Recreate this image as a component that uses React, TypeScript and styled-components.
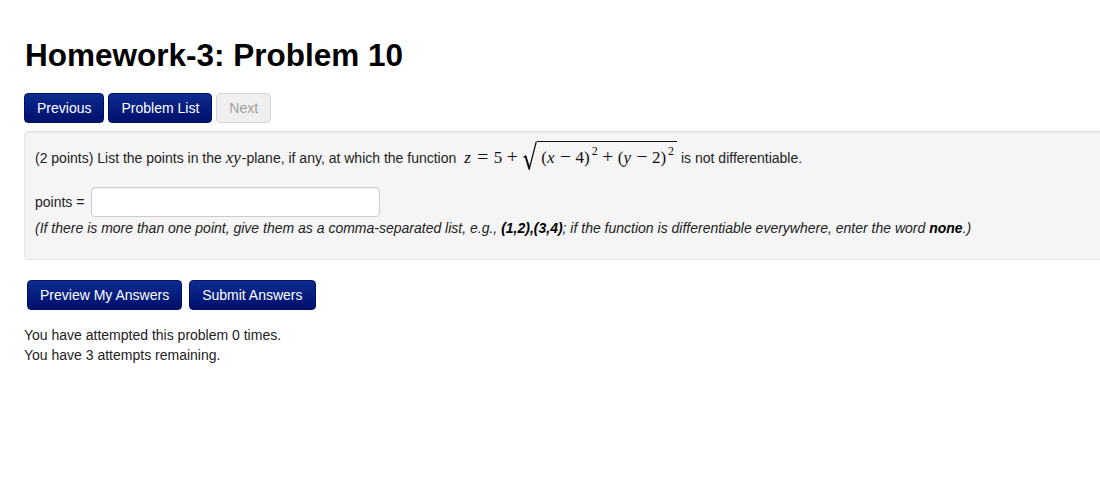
import React from 'react';
import styled, { createGlobalStyle } from 'styled-components';

const GlobalStyle = createGlobalStyle`
  html, body {
    margin: 0;
    padding: 0;
    background: #fff;
  }
  body {
    font-family: "Liberation Sans", Arial, sans-serif;
    font-size: 14px;
    line-height: 20px;
    color: #333;
  }
`;

const Page = styled.div`
  overflow: hidden;
  padding: 38px 0 0 24px;
`;

const Title = styled.h2`
  margin: 0 0 20px 1px;
  font-size: 31.5px;
  line-height: 1.1;
  font-weight: bold;
  color: #000;
`;

const NavBar = styled.div`
  display: flex;
  gap: 4px;
  margin-bottom: 8px;
`;

const Button = styled.button<{ $disabled?: boolean }>`
  font-family: "Liberation Sans", Arial, sans-serif;
  font-size: 14px;
  line-height: 20px;
  height: 30px;
  padding: 4px 12px;
  border-radius: 4px;
  border: 1px solid ${(p) => (p.$disabled ? '#d6d6d6' : '#001063')};
  background: ${(p) =>
    p.$disabled ? '#efefef' : 'linear-gradient(to bottom, #0c2c90, #000f6c)'};
  color: ${(p) => (p.$disabled ? '#a0a0a0' : '#fff')};
  cursor: ${(p) => (p.$disabled ? 'default' : 'pointer')};
`;

const Well = styled.div`
  width: 1100px;
  box-sizing: border-box;
  padding: 9px 10px 21px;
  background: #f5f5f5;
  border: 1px solid #e3e3e3;
  border-radius: 4px;
  box-shadow: inset 0 1px 1px rgba(0, 0, 0, 0.05);
  margin-bottom: 20px;
`;

const Statement = styled.div`
  color: #222;
`;

const Math = styled.span<{ $gap?: number }>`
  font-family: "Liberation Serif", "Times New Roman", serif;
  font-size: 17px;
  color: #111;
  white-space: nowrap;
  margin: 0 0 0 ${(p) => p.$gap ?? 0}px;
`;

const MathVar = styled.i`
  font-style: italic;
  padding-right: 1px;
`;

const Op = styled.span<{ $space: number }>`
  font-size: 19.5px;
  margin: 0 ${(p) => p.$space}px;
`;

const Sup = styled.sup`
  font-size: 12px;
  vertical-align: 0;
  position: relative;
  top: -8px;
  margin-left: 2px;
`;

const Radical = styled.span`
  display: inline-block;
  position: relative;
  margin-left: 1px;
  padding-left: 14px;
  vertical-align: baseline;
`;

const RadSign = styled.svg`
  position: absolute;
  left: 0;
  top: 0;
  width: 14px;
  height: 31px;
`;

const Radicand = styled.span`
  display: inline-block;
  border-top: 1px solid #111;
  padding: 5px 3px 5px 4px;
  line-height: 20px;
`;

const AnswerRow = styled.div`
  display: flex;
  align-items: center;
  gap: 7px;
  margin-top: 13px;
  color: #222;
`;

const AnswerInput = styled.input`
  width: 289px;
  height: 30px;
  box-sizing: border-box;
  padding: 4px 6px;
  font-family: "Liberation Sans", Arial, sans-serif;
  font-size: 14px;
  background: #fff;
  border: 1px solid #ccc;
  border-radius: 4px;
  box-shadow: inset 0 1px 1px rgba(0, 0, 0, 0.075);
`;

const Hint = styled.div`
  margin-top: 1px;
  font-style: italic;
  color: #222;
  b {
    color: #000;
  }
`;

const SubmitBar = styled.div`
  display: flex;
  gap: 7px;
  padding-left: 3px;
  margin-bottom: 15px;
`;

const Attempts = styled.div`
  color: #222;
`;

const App = () => {
  return (
    <>
      <GlobalStyle />
      <Page>
        <Title>Homework-3: Problem 10</Title>
        <NavBar>
          <Button>Previous</Button>
          <Button>Problem List</Button>
          <Button $disabled>Next</Button>
        </NavBar>
        <Well>
          <Statement>
            (2 points) List the points in the{' '}
            <Math>
              <MathVar>xy</MathVar>
            </Math>
            -plane, if any, at which the function{' '}
            <Math $gap={4}>
              <MathVar>z</MathVar>
              <Op $space={5.5}>=</Op>5<Op $space={4.5}>+</Op>
              <Radical>
                <RadSign viewBox="0 0 14 31" fill="none">
                  <path
                    d="M0.5 16.5 L2.5 15 L6.5 27 L13.3 0.6"
                    stroke="#111"
                    strokeWidth="1.3"
                    strokeLinejoin="miter"
                  />
                  <path d="M2.5 15.2 L6.4 28.5" stroke="#111" strokeWidth="1.8" />
                </RadSign>
                <Radicand>
                  (<MathVar>x</MathVar>
                  <Op $space={4.5}>−</Op>4)<Sup>2</Sup>
                  <Op $space={4.5}>+</Op>(<MathVar>y</MathVar>
                  <Op $space={4.5}>−</Op>2)<Sup>2</Sup>
                </Radicand>
              </Radical>
            </Math>{' '}
            is not differentiable.
          </Statement>
          <AnswerRow>
            <span>points =</span>
            <AnswerInput type="text" aria-label="points" />
          </AnswerRow>
          <Hint>
            (If there is more than one point, give them as a comma-separated list, e.g.,{' '}
            <b>(1,2),(3,4)</b>; if the function is differentiable everywhere, enter the word{' '}
            <b>none</b>.)
          </Hint>
        </Well>
        <SubmitBar>
          <Button>Preview My Answers</Button>
          <Button>Submit Answers</Button>
        </SubmitBar>
        <Attempts>
          You have attempted this problem 0 times.
          <br />
          You have 3 attempts remaining.
        </Attempts>
      </Page>
    </>
  );
};

export default App;
